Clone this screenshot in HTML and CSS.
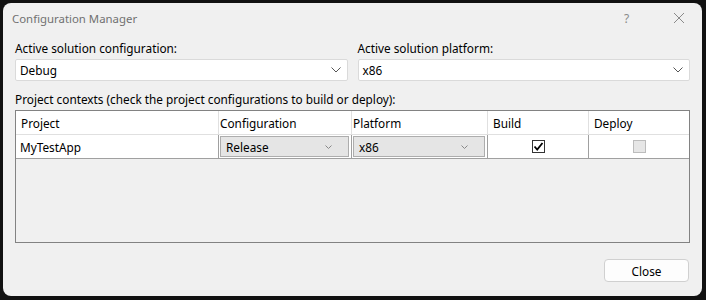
FILE: index.html
```html
<!DOCTYPE html>
<html>
<head>
<meta charset="utf-8">
<link rel="stylesheet" href="styles.css">
</head>
<body>
<div class="window">
  <div class="titlebar">
    <span class="title">Configuration Manager</span>
    <span class="help">?</span>
    <span class="close-x">
      <svg width="12" height="12" viewBox="0 0 12 12"><path d="M1 1L11 11M11 1L1 11" stroke="#8a8a8a" stroke-width="1" fill="none"/></svg>
    </span>
  </div>
  <div class="content">
    <div class="top-row">
      <div class="field">
        <div class="label">Active solution configuration:</div>
        <div class="combo"><span>Debug</span>
          <svg class="chev" width="10" height="6" viewBox="0 0 10 6"><path d="M0.5 0.5L5 5L9.5 0.5" stroke="#555" fill="none"/></svg>
        </div>
      </div>
      <div class="field">
        <div class="label">Active solution platform:</div>
        <div class="combo"><span>x86</span>
          <svg class="chev" width="10" height="6" viewBox="0 0 10 6"><path d="M0.5 0.5L5 5L9.5 0.5" stroke="#555" fill="none"/></svg>
        </div>
      </div>
    </div>
    <div class="label ctx">Project contexts (check the project configurations to build or deploy):</div>
    <div class="grid">
      <div class="row head">
        <div class="cell c1">Project</div>
        <div class="cell c2">Configuration</div>
        <div class="cell c3">Platform</div>
        <div class="cell c4">Build</div>
        <div class="cell c5">Deploy</div>
      </div>
      <div class="row data">
        <div class="cell c1">MyTestApp</div>
        <div class="cell c2"><div class="mini-combo"><span>Release</span><svg width="7" height="4" viewBox="0 0 7 4"><path d="M0.5 0.5L3.5 3.5L6.5 0.5" stroke="#888" fill="none"/></svg></div></div>
        <div class="cell c3"><div class="mini-combo"><span>x86</span><svg width="7" height="4" viewBox="0 0 7 4"><path d="M0.5 0.5L3.5 3.5L6.5 0.5" stroke="#888" fill="none"/></svg></div></div>
        <div class="cell c4 center"><div class="check on"><svg width="11" height="11" viewBox="0 0 11 11"><path d="M1.5 5.5L4.2 8.5L9.5 2" stroke="#000" stroke-width="1.8" fill="none"/></svg></div></div>
        <div class="cell c5 center"><div class="check off"></div></div>
      </div>
    </div>
    <div class="footer">
      <button class="btn">Close</button>
    </div>
  </div>
</div>
</body>
</html>
```
FILE: styles.css
```css
html, body {
  margin: 0;
  padding: 0;
  background: #111;
}
body {
  width: 706px;
  height: 300px;
  padding: 3px 4px 4px 3px;
  box-sizing: border-box;
  font-family: "Segoe UI", "Noto Sans", "Liberation Sans", sans-serif;
  font-size: 11.8px;
  color: #000;
}
.window {
  width: 699px;
  height: 293px;
  background: #f0f0f0;
  border-radius: 8px;
  display: flex;
  flex-direction: column;
  overflow: hidden;
}
.titlebar {
  height: 30px;
  display: flex;
  align-items: center;
  padding-left: 9px;
  flex: none;
}
.title {
  color: #707070;
  font-size: 11.4px;
  flex: 1;
}
.help {
  color: #8a8a8a;
  font-size: 12px;
  width: 14px;
  margin-right: 35px;
}
.close-x {
  width: 12px;
  height: 12px;
  margin-right: 17px;
  display: flex;
}
.content {
  padding: 6px 12px 0 12px;
  flex: 1;
  display: flex;
  flex-direction: column;
}
.top-row {
  display: flex;
  gap: 10px;
}
.field {
  flex: 1;
}
.label {
  height: 20px;
  line-height: 18px;
}
.combo {
  height: 22px;
  box-sizing: border-box;
  background: #fff;
  border: 1px solid #dadada;
  border-radius: 2px;
  display: flex;
  align-items: center;
  padding: 0 6px 0 4px;
}
.combo span { flex: 1; }
.chev { flex: none; }
.ctx {
  margin-top: 9px;
  height: 20px;
}
.grid {
  height: 133px;
  border: 1px solid #828282;
  box-sizing: border-box;
  background: #f0f0f0;
}
.row {
  display: flex;
  background: #fff;
}
.row.head {
  height: 23px;
  border-bottom: 1px solid #e0e0e0;
}
.row.data {
  height: 24px;
}
.cell {
  box-sizing: border-box;
  border-right: 1px solid #a0a0a0;
  display: flex;
  align-items: center;
  padding-left: 4px;
}
.row.head .cell { border-right-color: #e0e0e0; padding-left: 5px; }
.row.data .cell { border-bottom: 1px solid #a0a0a0; }
.c1 { width: 203px; }
.c2 { width: 133px; padding-left: 1px !important; }
.c3 { width: 136px; padding-left: 1px !important; }
.c4 { width: 101px; }
.c5 { flex: 1; border-right: none !important; }
.center { justify-content: center; padding-left: 0; }
.mini-combo {
  width: calc(100% - 2px);
  height: 21px;
  box-sizing: border-box;
  background: #e5e5e5;
  border: 1px solid #adadad;
  display: flex;
  align-items: center;
  padding: 0 16px 0 5px;
}
.mini-combo span { flex: 1; }
.check {
  width: 13px;
  height: 13px;
  box-sizing: border-box;
  border: 1px solid #333;
  background: #fff;
  display: flex;
  align-items: center;
  justify-content: center;
}
.check.off {
  border-color: #bcbcbc;
  background: #e6e6e6;
}
.footer {
  display: flex;
  justify-content: flex-end;
  padding-top: 16px;
  padding-right: 1px;
}
.btn {
  width: 85px;
  height: 23px;
  background: #fdfdfd;
  border: 1px solid #d0d0d0;
  border-radius: 4px;
  font-family: inherit;
  font-size: 11.8px;
  color: #000;
  padding: 0;
}
```
